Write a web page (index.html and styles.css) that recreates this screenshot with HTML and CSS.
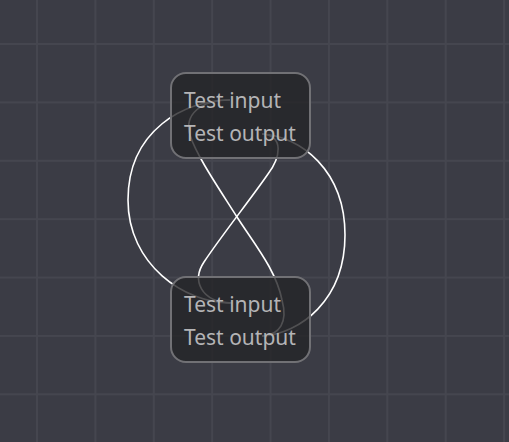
FILE: index.html
```html
<!DOCTYPE html>
<html lang="en">
<head>
    <meta charset="UTF-8">
    <meta name="viewport" content="width=device-width, initial-scale=1.0">
    <title>Graph</title>
    <link rel="stylesheet" href="styles.css">
</head>
<body>
    <div class="canvas">
        <svg class="wires" width="509" height="442" viewBox="0 0 509 442">
            <!-- top input -> bottom input -->
            <path d="M230 100 C185 100 128 130 128 200 C128 265 185 303 230 303"/>
            <!-- top output -> bottom output -->
            <path d="M262 134 C300 136 345 170 345 235 C345 300 300 334 262 336"/>
            <!-- top input -> bottom output -->
            <path d="M230 100 C200 100 184 115 190 135 C196 155 220 190 237 217 C255 245 276 270 282 300 C288 322 280 335 262 336"/>
            <!-- top output -> bottom input -->
            <path d="M262 134 C285 136 280 158 268 174 C250 200 222 235 204 262 C192 280 200 302 232 303"/>
        </svg>

        <div class="node node-top">
            <div class="port">Test input</div>
            <div class="port">Test output</div>
        </div>
        <div class="node node-bottom">
            <div class="port">Test input</div>
            <div class="port">Test output</div>
        </div>
    </div>
</body>
</html>
```

FILE: styles.css
```css
html, body {
    margin: 0;
    padding: 0;
}
body {
    background-color: #3b3c45;
    font-family: "Noto Sans", sans-serif;
}
.canvas {
    position: relative;
    width: 509px;
    height: 442px;
    overflow: hidden;
    background-color: #3b3c45;
    background-image:
        linear-gradient(to right, #45464f 0, #45464f 2px, transparent 2px),
        linear-gradient(to bottom, #45464f 0, #45464f 2px, transparent 2px);
    background-size: 58.4px 58.4px;
    background-position: 36px 43px;
}
.wires {
    position: absolute;
    left: 0;
    top: 0;
}
.wires path {
    fill: none;
    stroke: #ffffff;
    stroke-width: 1.6;
}
.node {
    position: absolute;
    left: 170px;
    width: 141px;
    box-sizing: border-box;
    padding: 10px 12px 7px;
    border: 2px solid #717175;
    border-radius: 16px;
    background-color: rgba(36, 36, 39, 0.8);
    color: #b4b4b6;
}
.node-top {
    top: 72px;
}
.node-bottom {
    top: 276px;
}
.port {
    font-size: 21px;
    line-height: 33px;
    white-space: nowrap;
}
```
